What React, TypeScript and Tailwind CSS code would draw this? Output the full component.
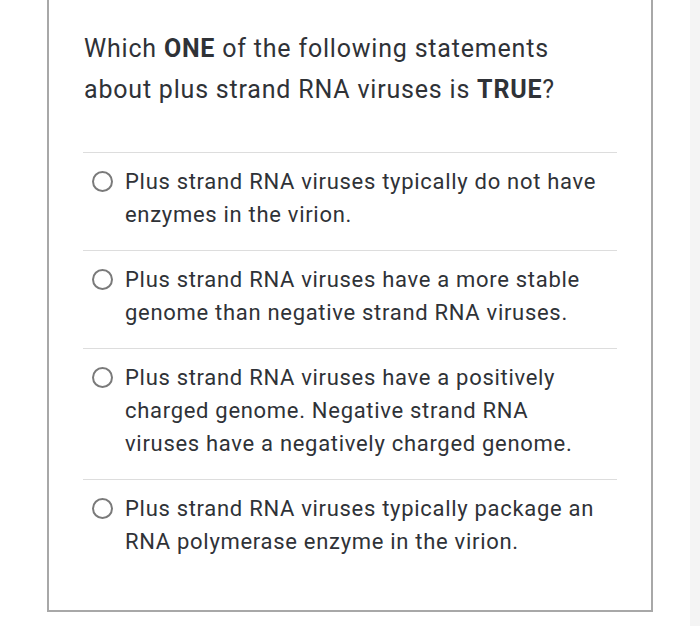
const options = [
  "Plus strand RNA viruses typically do not have enzymes in the virion.",
  "Plus strand RNA viruses have a more stable genome than negative strand RNA viruses.",
  "Plus strand RNA viruses have a positively charged genome. Negative strand RNA viruses have a negatively charged genome.",
  "Plus strand RNA viruses typically package an RNA polymerase enzyme in the virion.",
];

export default function App() {
  return (
    <div
      className="flex h-[626px] w-[700px] bg-white text-[#2f3237]"
      style={{ fontFamily: "Roboto, 'Liberation Sans', sans-serif" }}
    >
      <div className="ml-[47px] h-[612px] w-[606px] border-x-2 border-b-2 border-[#a8a8a8] px-[34px] pt-[28px]">
        <h1 className="text-[25px] leading-[41px] font-normal tracking-[0.8px] pl-px pr-6">
          Which <span className="font-bold">ONE</span> of the following statements about plus strand RNA viruses is{" "}
          <span className="font-bold">TRUE</span>?
        </h1>

        <div className="mt-[42px]">
          {options.map((text) => (
            <label
              key={text}
              className="flex items-start gap-[12px] border-t border-[#dddddd] pl-[9px] pr-4 pt-[12px] pb-[19px]"
            >
              <span className="mt-[6px] h-[21px] w-[21px] shrink-0 rounded-full border-2 border-[#7a7a7a]" />
              <span className="text-[22px] leading-[33px] tracking-[0.7px]">{text}</span>
            </label>
          ))}
        </div>
      </div>
      <div className="ml-auto h-full w-[10px] bg-[#f4f4f4]" />
    </div>
  );
}
